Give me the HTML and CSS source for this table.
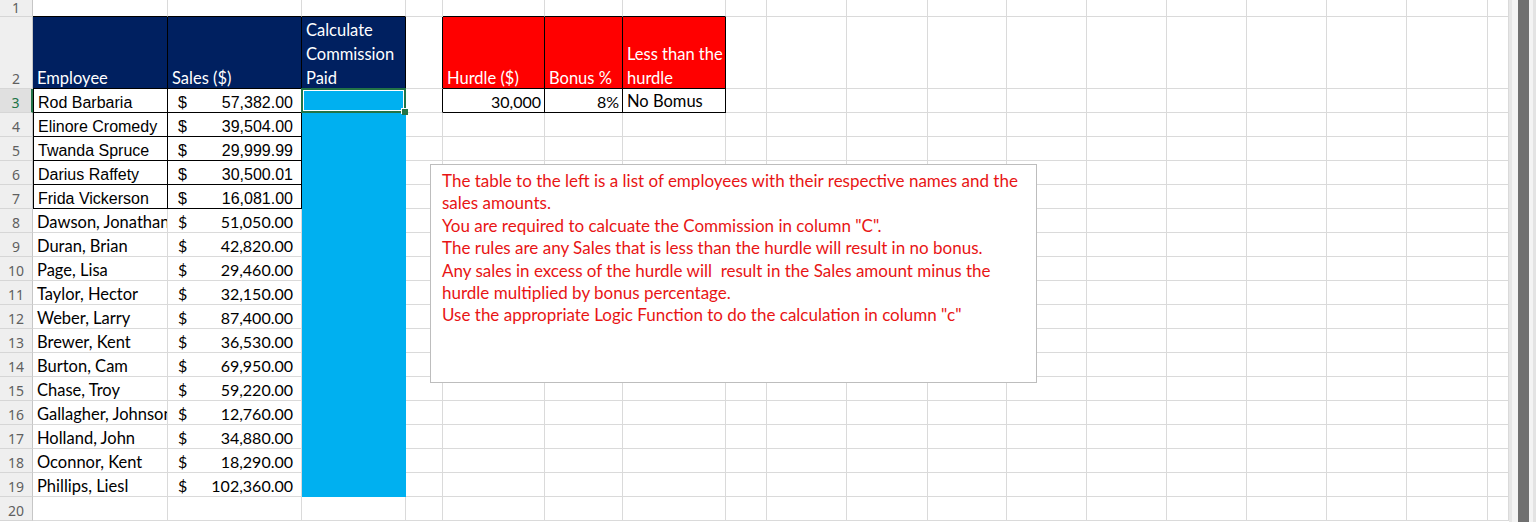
FILE: index.html
```html
<!DOCTYPE html>
<html>
<head>
<meta charset="utf-8">
<title>Commission sheet</title>
<link rel="stylesheet" href="styles.css">
</head>
<body>
<div class="sheet">
  <div class="row r1">
    <div class="rh">1</div>
    <div class="bb"></div><div class="bb"></div><div class="bb"></div><div></div>
    <div class="bb"></div><div class="bb"></div><div class="bb"></div>
    <div></div><div></div><div></div><div></div><div></div><div></div><div></div><div></div><div></div><div></div><div></div>
  </div>
  <div class="row r2">
    <div class="rh">2</div>
    <div class="hd nv"><span>Employee</span></div>
    <div class="hd nv"><span>Sales ($)</span></div>
    <div class="hd nv"><span>Calculate Commission Paid</span></div>
    <div class="br"></div>
    <div class="hd rd"><span>Hurdle ($)</span></div>
    <div class="hd rd"><span>Bonus %</span></div>
    <div class="hd rd tight"><span>Less than the<br>hurdle</span></div>
    <div></div><div></div><div></div><div></div><div></div><div></div><div></div><div></div><div></div><div></div><div></div>
  </div>
  <div class="row">
    <div class="rh on">3</div>
    <div class="bx bl ar">Rod Barbaria</div>
    <div class="bx ar b"><span>$</span><span>57,382.00</span></div>
    <div class="blue cur"><span class="sel"></span></div>
    <div class="br"></div>
    <div class="bx num">30,000</div>
    <div class="bx num">8%</div>
    <div class="bx">No Bomus</div>
    <div></div><div></div><div></div><div></div><div></div><div></div><div></div><div></div><div></div><div></div><div></div>
  </div>
  <div class="row">
    <div class="rh">4</div>
    <div class="bx bl ar">Elinore Cromedy</div>
    <div class="bx ar b"><span>$</span><span>39,504.00</span></div>
    <div class="blue"></div>
    <div></div><div></div><div></div><div></div>
    <div></div><div></div><div></div><div></div><div></div><div></div><div></div><div></div><div></div><div></div><div></div>
  </div>
  <div class="row">
    <div class="rh">5</div>
    <div class="bx bl ar">Twanda Spruce</div>
    <div class="bx ar b"><span>$</span><span>29,999.99</span></div>
    <div class="blue"></div>
    <div></div><div></div><div></div><div></div>
    <div></div><div></div><div></div><div></div><div></div><div></div><div></div><div></div><div></div><div></div><div></div>
  </div>
  <div class="row">
    <div class="rh">6</div>
    <div class="bx bl ar">Darius Raffety</div>
    <div class="bx ar b"><span>$</span><span>30,500.01</span></div>
    <div class="blue"></div>
    <div></div><div></div><div></div><div></div>
    <div></div><div></div><div></div><div></div><div></div><div></div><div></div><div></div><div></div><div></div><div></div>
  </div>
  <div class="row">
    <div class="rh">7</div>
    <div class="bx bl ar">Frida Vickerson</div>
    <div class="bx ar b"><span>$</span><span>16,081.00</span></div>
    <div class="blue"></div>
    <div></div><div></div><div></div><div></div>
    <div></div><div></div><div></div><div></div><div></div><div></div><div></div><div></div><div></div><div></div><div></div>
  </div>
  <div class="row">
    <div class="rh">8</div>
    <div class="nm">Dawson, Jonathan</div>
    <div class="b"><span>$</span><span>51,050.00</span></div>
    <div class="blue"></div>
    <div></div><div></div><div></div><div></div>
    <div></div><div></div><div></div><div></div><div></div><div></div><div></div><div></div><div></div><div></div><div></div>
  </div>
  <div class="row">
    <div class="rh">9</div>
    <div class="nm">Duran, Brian</div>
    <div class="b"><span>$</span><span>42,820.00</span></div>
    <div class="blue"></div>
    <div></div><div></div><div></div><div></div>
    <div></div><div></div><div></div><div></div><div></div><div></div><div></div><div></div><div></div><div></div><div></div>
  </div>
  <div class="row">
    <div class="rh">10</div>
    <div class="nm">Page, Lisa</div>
    <div class="b"><span>$</span><span>29,460.00</span></div>
    <div class="blue"></div>
    <div></div><div></div><div></div><div></div>
    <div></div><div></div><div></div><div></div><div></div><div></div><div></div><div></div><div></div><div></div><div></div>
  </div>
  <div class="row">
    <div class="rh">11</div>
    <div class="nm">Taylor, Hector</div>
    <div class="b"><span>$</span><span>32,150.00</span></div>
    <div class="blue"></div>
    <div></div><div></div><div></div><div></div>
    <div></div><div></div><div></div><div></div><div></div><div></div><div></div><div></div><div></div><div></div><div></div>
  </div>
  <div class="row">
    <div class="rh">12</div>
    <div class="nm">Weber, Larry</div>
    <div class="b"><span>$</span><span>87,400.00</span></div>
    <div class="blue"></div>
    <div></div><div></div><div></div><div></div>
    <div></div><div></div><div></div><div></div><div></div><div></div><div></div><div></div><div></div><div></div><div></div>
  </div>
  <div class="row">
    <div class="rh">13</div>
    <div class="nm">Brewer, Kent</div>
    <div class="b"><span>$</span><span>36,530.00</span></div>
    <div class="blue"></div>
    <div></div><div></div><div></div><div></div>
    <div></div><div></div><div></div><div></div><div></div><div></div><div></div><div></div><div></div><div></div><div></div>
  </div>
  <div class="row">
    <div class="rh">14</div>
    <div class="nm">Burton, Cam</div>
    <div class="b"><span>$</span><span>69,950.00</span></div>
    <div class="blue"></div>
    <div></div><div></div><div></div><div></div>
    <div></div><div></div><div></div><div></div><div></div><div></div><div></div><div></div><div></div><div></div><div></div>
  </div>
  <div class="row">
    <div class="rh">15</div>
    <div class="nm">Chase, Troy</div>
    <div class="b"><span>$</span><span>59,220.00</span></div>
    <div class="blue"></div>
    <div></div><div></div><div></div><div></div>
    <div></div><div></div><div></div><div></div><div></div><div></div><div></div><div></div><div></div><div></div><div></div>
  </div>
  <div class="row">
    <div class="rh">16</div>
    <div class="nm">Gallagher, Johnson</div>
    <div class="b"><span>$</span><span>12,760.00</span></div>
    <div class="blue"></div>
    <div></div><div></div><div></div><div></div>
    <div></div><div></div><div></div><div></div><div></div><div></div><div></div><div></div><div></div><div></div><div></div>
  </div>
  <div class="row">
    <div class="rh">17</div>
    <div class="nm">Holland, John</div>
    <div class="b"><span>$</span><span>34,880.00</span></div>
    <div class="blue"></div>
    <div></div><div></div><div></div><div></div>
    <div></div><div></div><div></div><div></div><div></div><div></div><div></div><div></div><div></div><div></div><div></div>
  </div>
  <div class="row">
    <div class="rh">18</div>
    <div class="nm">Oconnor, Kent</div>
    <div class="b"><span>$</span><span>18,290.00</span></div>
    <div class="blue"></div>
    <div></div><div></div><div></div><div></div>
    <div></div><div></div><div></div><div></div><div></div><div></div><div></div><div></div><div></div><div></div><div></div>
  </div>
  <div class="row">
    <div class="rh">19</div>
    <div class="nm">Phillips, Liesl</div>
    <div class="b"><span>$</span><span>102,360.00</span></div>
    <div class="blue"></div>
    <div></div><div></div><div></div><div></div>
    <div></div><div></div><div></div><div></div><div></div><div></div><div></div><div></div><div></div><div></div><div></div>
  </div>
  <div class="row">
    <div class="rh">20</div>
    <div></div><div></div><div></div><div></div><div></div><div></div><div></div>
    <div></div><div></div><div></div><div></div><div></div><div></div><div></div><div></div><div></div><div></div><div></div>
  </div>

  <div class="note">
    <p>The table to the left is a list of employees with their respective names and the<br>sales amounts.<br>You are required to calcuate the Commission in column "C".<br>The rules are any Sales that is less than the hurdle will result in no bonus.<br>Any sales in excess of the hurdle will&nbsp; result in the Sales amount minus the<br>hurdle multiplied by bonus percentage.<br>Use the appropriate Logic Function to do the calculation in column "c"</p>
  </div>
</div>
<div class="vscroll"><div class="thumb"></div></div>
</body>
</html>
```

FILE: styles.css
```css
* { box-sizing: border-box; }
html, body { margin: 0; padding: 0; }
body {
  width: 1536px;
  height: 522px;
  overflow: hidden;
  background: #fff;
  display: flex;
  font-family: Lato, "Noto Sans", sans-serif;
  font-size: 16.5px;
  color: #000;
}
.sheet {
  position: relative;
  width: 1509px;
  height: 522px;
  flex: none;
}
.row {
  display: grid;
  grid-template-columns: 33px 135px 134px 104px 37px 102px 78px 103px 41px 80px 81px 79px 80px 80px 80px 80px 80px 81px 21px;
  height: 24px;
}
.row.r1 { height: 17px; }
.row.r2 { height: 72px; }
.row > div {
  border-right: 1px solid #dadada;
  border-bottom: 1px solid #dadada;
  display: flex;
  align-items: flex-end;
  white-space: nowrap;
  overflow: hidden;
  padding: 0 4px;
  line-height: 21px;
  min-width: 0;
}
.row > .nm { line-height: 20px; }
.row > .rh {
  justify-content: center;
  background: #efefef;
  color: #5f5f5f;
  font-family: "Noto Sans", sans-serif;
  font-size: 14px;
  line-height: 19px;
  border-right-color: #c6c6c6;
  border-bottom-color: #d6d6d6;
  padding: 0;
  overflow: visible;
}
.row.r1 > .rh { line-height: 16px; }
.row > .rh.on {
  background: #e0e0e0;
  color: #217346;
  border-right: 2px solid #217346;
}
.row > .bb { border-bottom-color: #000; }
.row > .br { border-right-color: #000; }
.row > .bx { border-right-color: #000; border-bottom-color: #000; }
.row > .bl { border-left: 1px solid #000; }
.row > .ar {
  font-family: "Liberation Sans", Arial, sans-serif;
  font-size: 16px;
  line-height: 19px;
}
.row > .b {
  justify-content: space-between;
  padding-left: 10px;
  padding-right: 8px;
  font-size: 16px;
}
.row > .num { justify-content: flex-end; padding-right: 3px; font-size: 16px; }
.row > .hd {
  color: #fff;
  white-space: normal;
  line-height: 24px;
  border-right-color: #000;
  border-bottom-color: #000;
}
.row > .hd.tight { white-space: nowrap; padding-right: 0; }
.row > .hd > span { margin-bottom: -2px; }
.row > .nv { background: #002060; }
.row > .rd { background: #ff0000; }
.row > .blue {
  background: #00b0f0;
  border-right-color: #00b0f0;
  border-bottom-color: #00b0f0;
}
.row > .cur { position: relative; overflow: visible; }
.sel {
  position: absolute;
  left: -1px;
  top: -1px;
  right: -1px;
  bottom: -1px;
  border: 2px solid #217346;
  box-shadow: inset 0 0 0 1px #fff;
  z-index: 2;
}
.sel::after {
  content: "";
  position: absolute;
  right: -4px;
  bottom: -4px;
  width: 6px;
  height: 6px;
  background: #217346;
  box-shadow: -1px -1px 0 0 #fff;
}
.note {
  position: absolute;
  left: 430px;
  top: 164px;
  width: 607px;
  height: 219px;
  background: #fff;
  border: 1px solid #bdbdbd;
  padding: 5px 11px;
  z-index: 3;
}
.note p {
  margin: 0;
  color: #e81414;
  font-family: Lato, "Noto Sans", sans-serif;
  font-size: 17px;
  line-height: 22.4px;
  white-space: nowrap;
}
.vscroll {
  width: 27px;
  height: 522px;
  flex: none;
  display: flex;
  background: #f3f3f3;
  border-left: 3px solid #e6e6e6;
  border-right: 3px solid #e3e3e3;
  padding-left: 6px;
}
.thumb {
  width: 11px;
  height: 100%;
  background: #707070;
}
```
